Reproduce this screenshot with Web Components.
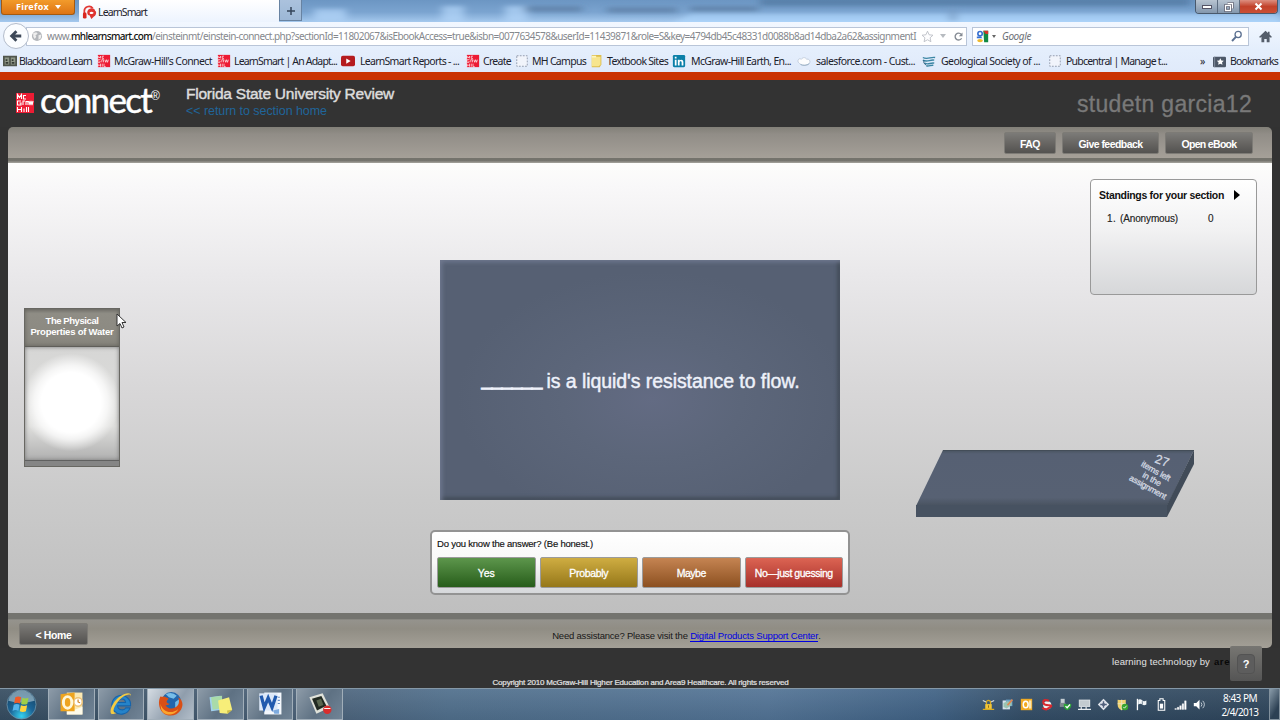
<!DOCTYPE html>
<html lang="en">
<head>
<meta charset="utf-8">
<title>LearnSmart</title>
<style>
body { margin: 0; width: 1280px; height: 720px; overflow: hidden; background: #323232; font-family: "Liberation Sans", sans-serif; }
</style>
</head>
<body>
<browser-chrome></browser-chrome>
<connect-header course="Florida State University Review" user="studetn garcia12"></connect-header>
<learn-frame>
  <tool-button slot="tools" w="52" t="20">FAQ</tool-button>
  <tool-button slot="tools" w="97" t="64">Give feedback</tool-button>
  <tool-button slot="tools" w="88" t="55">Open eBook</tool-button>
  <topic-card slot="left"></topic-card>
  <question-card slot="middle"></question-card>
  <answer-panel slot="middle"></answer-panel>
  <standings-box slot="right"></standings-box>
  <card-stack slot="right"></card-stack>
  <tool-button slot="home" w="69" t="36">&lt; Home</tool-button>
</learn-frame>
<page-credits></page-credits>
<task-bar></task-bar>

<script>
const icons = {
  globe: '<circle cx="8" cy="8" r="6.8" fill="#b4b7bb"/><path d="M3 4l4-1 2 2-3 2 1 2-2 3-2-3zM10 7l4-1-1 5-3 2z" fill="#eee"/>',
  learn: '<path d="M2.500 9V7a5 5 0 0 1 9-3.500" fill="none" stroke="#e23a35" stroke-width="1.800"/><rect x="1" y="8" width="3.800" height="6.500" rx="1.500" fill="#d9251f"/><path d="M6 6c1-3 7-4 8 0 2 1 1 5-1 6l-3 3-2-4c-2 0-3-3-2-5z" fill="#df3530"/><path d="M8 8.200q2-2 4.500 0-1 2-4 1z" fill="#fff"/>',
  bb: '<rect y="2" width="16" height="12" fill="#50564c"/><path d="M2 4h5v8H2zM9 4h5v8H9z" fill="#8f9787"/><path d="M3 6h2v2H3zM10 6h2v2h-2zM3 9h3v2H3zM10 9h3v2h-3z" fill="#363b35"/>',
  mh: '<rect x="1" y="1" width="14" height="14" fill="#ed1b34"/><path d="M1 5V2.500l1.500 2 1.500-2V5M8 2.500H6V5h2M1 6.500h3M1 6.500v3h2.500V8M5.500 9.500v-3h2v3M9 6.500l1 3 1-3 1 3 1-3M1 11v3.500M4 11v3.500M1 12.800h3M6 11v3.500M8 11v3.500h2" fill="none" stroke="#fff" stroke-opacity=".85" stroke-width=".9"/>',
  yt: '<rect y="2" width="16" height="12" rx="2" fill="#b51b1e"/><path d="M6 5l5 3-5 3z" fill="#fff"/>',
  blank: '<rect x="2" y="2" width="12" height="12" fill="#f1f4fb" stroke="#8993a6" stroke-dasharray="2 1.500"/>',
  folder: '<path d="M2 1h11v11l-2 3H2z" fill="#ddbd4d"/><path d="M2 3h10v9l-2 2H2z" fill="#f7e58e"/><path d="M2 2h5v2H2z" fill="#fff6bd"/>',
  li: '<rect x="1" y="1" width="14" height="14" rx="1.500" fill="#0b7fa8"/><path d="M3.200 6.500h2V13h-2zM3.200 3.200h2v2h-2zM6.700 6.500h2v1c1-1.700 4.300-1.500 4.300 1.500v4h-2V9.500c0-1.700-2.300-1.700-2.300 0V13h-2z" fill="#fff"/>',
  cloud: '<path d="M3 11c-4-3-1-7 2-5 2-3 5-2 6 0 4-1 5 4 2 6-3 2-7 1-10-1z" fill="#fcfdfe" stroke="#b4c2d2" stroke-width=".8"/><path d="M4 12c3 1.500 7 1 10-1" fill="none" stroke="#8fa9c0"/>',
  geo: '<path d="M1 4c5 3 9-1 14 0M1 7c5 3 8-1 13 0M3 10.500c4 2.500 7-1 11 0M5 13.500c3 1 5-1 8-.5" fill="none" stroke="#3b86a4" stroke-width="1.600"/><path d="M2 7q-1 4 3 6" fill="none" stroke="#2a5c7a"/>',
  marks: '<rect y="2" width="16" height="13" rx="1.500" fill="#4d5868"/><path d="M2 2v13" stroke="#8b96a6"/><path d="M9 4l1.300 2.700 3 .4-2.200 2 .6 3L9 10.700 6.300 12.100l.6-3-2.200-2 3-.4z" fill="#fff"/>',
  back: '<path d="M8.500 2.500L3 8l5.500 5.500M3.500 8H14" fill="none" stroke="#3d4858" stroke-width="3.200"/>',
  star: '<path d="M8 1.500l2 4.400 4.700.5-3.500 3.200 1 4.800L8 12l-4.200 2.400 1-4.800L1.300 6.400 6 5.900z" fill="#fdfdfe" stroke="#b5b9c0"/>',
  reload: '<path d="M12.500 10.500a5 5 0 1 1-.5-5.500" fill="none" stroke="#858b94" stroke-width="2"/><path d="M13.800 2v5.500H8.500z" fill="#858b94"/>',
  google: '<rect x="1" y="1" width="14" height="14" fill="#fff"/><path d="M9 1h6v14h-5z" fill="#128a45"/><path d="M9 1h6v4h-3z" fill="#d6332a"/><circle cx="5" cy="4.500" r="2.700" fill="none" stroke="#356fd0" stroke-width="2"/><path d="M1 8h5l2 2H1z" fill="#356fd0"/><ellipse cx="5" cy="13" rx="3.500" ry="2" fill="#f0ba2c"/>',
  find: '<circle cx="10" cy="5.500" r="3.800" fill="none" stroke="#5b7091" stroke-width="1.600"/><path d="M7.300 8.500L2.500 13.500" stroke="#5b7091" stroke-width="2.400"/>',
  house: '<path d="M8 1L0 8.500l1.500 1L3 8.300V15h3.500v-4h3v4H13V8.300l1.500 1.200 1.500-1-3-2.900V2h-2v1.800z" fill="#555e6b"/>',
  win: '<defs><radialGradient id="o" cx=".5" cy=".9" r=".9"><stop offset="0" stop-color="#35d1ef"/><stop offset=".45" stop-color="#1c6698"/><stop offset="1" stop-color="#16405f"/></radialGradient></defs><circle cx="8" cy="8" r="7.500" fill="url(#o)" stroke="#7296ac" stroke-width=".4"/><path d="M1.200 6A7 7 0 0 1 14.800 6Q8 8 1.200 6z" fill="#b9d0db" opacity=".6"/><path d="M4.800 4.300q1.500-.8 3 0L7.200 7.500q-1.400-.7-3 0z" fill="#f05b28"/><path d="M8.400 4.500q1.600.8 3.200 0L11 7.700q-1.600.7-3.200 0z" fill="#9fcf47"/><path d="M4 8.100q1.500-.7 3 0L6.400 11.300q-1.500-.8-3 0z" fill="#55b4ec"/><path d="M7.700 8.400q1.600.7 3.200 0l-.6 3.100q-1.600.8-3.200 0z" fill="#ffd33d"/>',
  outlook: '<rect x="5" y="1" width="10" height="14" fill="#fce9b2"/><path d="M5 10l5 2 5-2v5H5z" fill="#fffbea"/><path d="M1 2l9-1v12L1 13z" fill="#eea41f"/><ellipse cx="5.500" cy="7.300" rx="2.700" ry="3.700" fill="none" stroke="#fff6d6" stroke-width="1.900"/><circle cx="12.200" cy="7" r="2.700" fill="#fff" stroke="#eec275"/><path d="M12.200 5.500V7l1.300.6" fill="none" stroke="#cc7b12" stroke-width=".7"/>',
  ie: '<path d="M13.800 9.500H5.500c.4 3.300 4.500 3 5.200 1.300H13.500A6 6 0 1 1 13.800 9.500zM5.600 7.400h5c-.3-3-4.500-3-5 0z" fill="#2583c9" stroke="#1464ac" stroke-width=".7"/><path d="M14 3.500C14.800-.8 6 2 2.500 8.500.5 12-.2 16.500 4.700 14 1.500 14 3 10 6 6.500S14 .800 14 3.500z" fill="#f3cb42"/>',
  firefox: '<circle cx="8.500" cy="7" r="6.300" fill="#2366ad"/><path d="M5 2q4-2 7 1l-2 2-3-1zM11 7l3-2v4l-3 2z" fill="#77bde8"/><path d="M1.500 3.500Q2.500 4 4 3.500 5.500 4 6.800 4.800L5.500 6.500c0 1 .8 1.500 2 1.700-.8 1-2 1-2.700 1 2 2.800 6 2.500 8-.2.800-1.300.8-3.200.2-5C16 6 16.300 9 14.700 12c-3 5-10.500 5-13 0C.200 9 .400 6 1.500 3.500z" fill="#d94f16"/><path d="M1.500 8c1 5 7 7.500 11.500 3.500-2 4.500-9.500 5-11 0z" fill="#fba52d"/>',
  notes: '<path d="M1 4l7-1 1 9-7 1z" fill="#a1d1ee"/><path d="M2 4l7-1v8l-6 1z" fill="#a9dba9"/><path d="M6.500 6l7-2 2 8-3 2.500-5-.5z" fill="#f7ee79"/><path d="M15.500 12l-3 2.500-.3-2z" fill="#cdbd48"/>',
  word: '<rect x="4" y="1" width="11" height="14" fill="#f4f8fd"/><path d="M12.500 4H14M12.500 6H14M12.500 8H14" stroke="#6b91c5" stroke-width=".7"/><path d="M.8 1.500H12.500V12.500H.8z" fill="#dce8f8"/><path d="M2 3l2 7.500 2.500-6 2.500 6L11.500 3" fill="none" stroke="#215aae" stroke-width="2.100"/><path d="M9.500 12.500l4-1v3h-3z" fill="#7eabdf"/>',
  cam: '<path d="M1.500 4l8.500-2.500 4.500 9-8.500 4z" fill="#e0e2da"/><path d="M3.200 5l6-1.800 3.200 6.300-6 3z" fill="#222a22"/><path d="M6 6l3-1 1.500 4-3 1z" fill="#59664f"/><circle cx="13" cy="12" r="2.700" fill="#d82d2d"/><path d="M11 11.200h4" stroke="#fff" stroke-width=".6"/>',
  lock: '<path d="M1 3l4 2M15 3l-4 2" stroke="#ddd" stroke-width="1.300"/><path d="M5.500 8V5.500a2.500 2.500 0 0 1 5 0V8" fill="none" stroke="#d9ac21" stroke-width="1.500"/><rect x="4" y="7.500" width="8" height="6" fill="#f4c636"/><path d="M1 14h14" stroke="#d9ac21" stroke-width="1.500"/><path d="M8 9v3" stroke="#765b10"/>',
  pc: '<path d="M2 3h9v11H2z" fill="#d5e3ed"/><path d="M6 2h8v8H6z" fill="#6ba4c8"/><path d="M3 6l5-2 5 1v4l-6 4-4-2z" fill="#9ac4b2"/><path d="M8 9l6-7" stroke="#e28650" stroke-width="2"/>',
  outl: '<rect x="1" y="1" width="14" height="14" fill="#f1aa22"/><path d="M11 3h3v10h-3z" fill="#fbe7b1"/><ellipse cx="7" cy="8" rx="3" ry="4" fill="none" stroke="#fff" stroke-width="1.800"/>',
  s: '<circle cx="9" cy="9" r="5" fill="#eee"/><path d="M11 3.500Q4 1 4 5t7 4-3 5q-3 0-5-2" fill="none" stroke="#d8272d" stroke-width="2.600"/>',
  usb: '<path d="M2 1h5v7H2z" fill="#c4ccd2"/><path d="M1 6h7v5H1z" fill="#7d8790"/><path d="M6 7l5 1 4-1q1 6-5 8-5-2-4-8z" fill="#2ba336"/><path d="M8 10l2 2 3.500-4" fill="none" stroke="#fff" stroke-width="1.500"/>',
  net: '<rect x="1" y="2" width="14" height="9" fill="#dce2e5"/><path d="M2 3h12v7H2z" fill="#c3cbd0"/><path d="M0 14h16M4 11v3M10 11v3" stroke="#e8ecef" stroke-width="1.500"/>',
  gem: '<path d="M8 1l7 7-7 7-7-7z" fill="#e0e4ec"/><path d="M8 4v8M4 8h8" stroke="#52617d" stroke-width="1.700"/><circle cx="8" cy="8" r="2" fill="#52617d"/>',
  shield: '<path d="M2 2q5 1 10 0v6q-1 5-5 7-5-2-5-7z" fill="#f2d371"/><path d="M7 2v13M2 7h10" stroke="#e7e5cd"/><circle cx="11" cy="11" r="4" fill="#37a32f"/><path d="M9 11l1.500 1.500L13 9.500" fill="none" stroke="#fff"/>',
  flag: '<path d="M3 1v14" stroke="#fff" stroke-width="1.600"/><path d="M4 2q3-1 5 1t5 0v5q-3 2-5 0T4 8z" fill="#f2f5f7"/><path d="M9 4v4" stroke="#52677c"/>',
  bat: '<path d="M6 1h4v2h2v12H4V3h2z" fill="none" stroke="#fff" stroke-width="1.300"/><path d="M6 7h4v6H6z" fill="#fff"/>',
  bars: '<path d="M1 13h2v1H1zM4 11.500h2V14H4zM7 9.500h2V14H7zM10 7h2v7h-2zM13 3.500h2V14h-2z" fill="#fff" stroke="#fff" stroke-width=".4"/>',
  vol: '<path d="M1 6h3l4-4v12l-4-4H1z" fill="#fff"/><path d="M10 5.500q2 2.500 0 5M12 3.500q4 4.500 0 9" fill="none" stroke="#dde5ec"/>'
};

// attaches an open root and fills it
function root(el, html) {
  el.attachShadow({ mode: 'open' }).innerHTML = html;
}

class UiIcon extends HTMLElement {
  constructor() {
    super();
    const s = this.getAttribute('s') || 14;
    root(this, `<style>:host{display:block;flex:none;width:${s}px;height:${s}px} svg{display:block}</style>
      <svg width="${s}" height="${s}" viewBox="0 0 16 16">${icons[this.getAttribute('n')]}</svg>`);
  }
}
customElements.define('ui-icon', UiIcon);

// one line of text, tracked so that it fills the width in w
class FitText extends HTMLElement {
  constructor() {
    super();
    root(this, `<style>:host{display:inline-block;flex:none;white-space:pre} span{display:inline-block}</style><span><slot></slot></span>`);
  }
  connectedCallback() {
    const span = this.shadowRoot.querySelector('span');
    const want = +this.getAttribute('w');
    const n = this.textContent.length;
    const got = span.getBoundingClientRect().width;
    span.style.letterSpacing = ((want - got) / n) + 'px';
    this.style.width = want + 'px';
  }
}

class BookmarkItem extends HTMLElement {
  constructor() {
    super();
    const a = this.getAttribute.bind(this);
    root(this, `<style>
      :host{display:flex;flex:none;align-items:center;width:${a('w')}px;height:22px}
      ui-icon{margin-right:${a('gap') || 3}px}
      </style><ui-icon n="${a('icon')}"></ui-icon><fit-text w="${a('t')}">${a('label')}</fit-text>`);
  }
}
customElements.define('bookmark-item', BookmarkItem);

class BrowserChrome extends HTMLElement {
  constructor() {
    super();
    const marks = [
      ['bb', 94, 2, 73, 'Blackboard Learn'], ['mh', 120, 3, 98, "McGraw-Hill's Connect"],
      ['mh', 124, 3, 103, 'LearnSmart | An Adapt...'], ['yt', 125, 5, 99, 'LearnSmart Reports - ...'],
      ['mh', 49, 3, 28, 'Create'], ['blank', 75, 3, 54, 'MH Campus'], ['folder', 82, 3, 61, 'Textbook Sites'],
      ['li', 125, 5, 100, 'McGraw-Hill Earth, En...'], ['cloud', 125, 5, 99, 'salesforce.com - Cust...'],
      ['geo', 126, 5, 99, 'Geological Society of ...'], ['blank', 152, 4, 101, 'Pubcentral | Manage t...']
    ];
    root(this, `<style>
      :host{display:block;height:80px;font:10.500px "Noto Sans",sans-serif;color:#1c222c}
      .top{height:22px;display:flex;position:relative;background:linear-gradient(#6c96c3,#7ba4d0 55%,#a5c9ee)}
      .aero{position:absolute;left:0;top:0}
      .fx{position:relative;width:74px;height:15px;margin:0 4px 0 1px;box-sizing:border-box;border:1px solid #a35a11;border-top:0;border-radius:0 0 3px 3px;background:linear-gradient(#f29b2b,#dd7414);color:#fff;font:bold 9px/13px "Noto Sans",sans-serif;display:flex;padding-left:14px;gap:6px}
      .fx i{border:3px solid transparent;border-top:4px solid #fff;border-bottom:0;height:0;margin-top:5px}
      .tab{position:relative;width:200px;height:22px;background:linear-gradient(#fff,#edf4fe);display:flex;align-items:center;gap:1px;box-sizing:border-box;padding:2px 0 0 3px}
      .plus{position:relative;width:23px;height:21px;background:linear-gradient(#abc2dd,#9cb7d6);border:1px solid #6883a2;border-width:0 1px 1px;box-sizing:border-box;display:grid;place-items:center;padding-top:2px}
      .wins{position:relative;margin-left:auto;margin-right:2px;display:flex;height:14px;border:1px solid #49596c;border-top:0;border-radius:0 0 4px 4px;overflow:hidden;box-sizing:border-box}
      .wins div{width:21px;background:linear-gradient(#b8c4d1,#8397ad);border-right:1px solid #5d6d80;display:grid;place-items:center}
      .wins div:last-child{width:37px;background:linear-gradient(#dd8f80,#c2422b 50%,#cb4f35);border:0}
      .nav{height:28px;background:linear-gradient(#f2f7ff,#e4eefc);display:flex;align-items:center;position:relative;box-sizing:border-box}
      .back{width:24px;height:24px;border:1px solid #b3bccb;border-radius:50%;background:#fbfdff;display:grid;place-items:center;margin-left:3px;position:relative;z-index:1}
      .field{height:19px;border:1px solid #b9c5d8;background:#fff;display:flex;align-items:center;box-sizing:border-box}
      .url{width:941px;margin-left:-3px;padding-left:7px;font-size:10px;color:#85888d}
      .url b{font-weight:500;color:#111}
      .search{width:277px;margin-left:5px;padding:0 3px;color:#6d7178;font-style:italic;font-size:10px}
      .search ui-icon:last-child{margin-left:auto;margin-right:2px}
      .dd{border:3px solid transparent;border-top:4px solid #b7bbc0;border-bottom:0;flex:none}
      .marks{height:22px;display:flex;align-items:center;background:linear-gradient(#e4eefc,#e0eafa);padding-left:3px}
      .red{height:8px;background:#ca3303}
      </style>
      <div class="top">
        <svg class="aero" width="1280" height="22"><defs><filter id="b"><feGaussianBlur stdDeviation="4 2"/></filter><linearGradient id="g" x2="0" y2="1"><stop offset="0" stop-color="#9cc5ee"/><stop offset="1" stop-color="#b4dafe"/></linearGradient></defs>
          <g filter="url(#b)"><path d="M690 14h590v12H670z" fill="url(#g)"/><path d="M314 9h32v12h-32zM442 6h22v16h-22zM505 6h22v16h-22z" fill="#b4d6fa" opacity=".7"/>
          <path d="M524 9h58M607 10h70M690 9h68" stroke="#4f6f93" stroke-width="5" opacity=".6"/><path d="M760 2h430" stroke="#45688f" stroke-width="8" opacity=".5"/><path d="M949 9h8v12h-8z" fill="#7599c2" opacity=".7"/></g></svg>
        <div class="fx"><fit-text w="33">Firefox</fit-text><i></i></div>
        <div class="tab"><ui-icon n="learn" s="15"></ui-icon><fit-text w="49">LearnSmart</fit-text></div>
        <div class="plus"><svg width="10" height="10"><path d="M5 1v8M1 5h8" stroke="#35445a" stroke-width="1.500"/></svg></div>
        <div class="wins"><div><svg width="10" height="6"><rect x=".5" y="1.500" width="9" height="3" fill="#fff" stroke="#556"/></svg></div><div><svg width="10" height="10"><path d="M3.500 1.500h5v5M1.500 3.500h5v5h-5z" fill="none" stroke="#445" stroke-width="2.400"/><path d="M3.500 1.500h5v5M1.500 3.500h5v5h-5z" fill="none" stroke="#fff" stroke-width="1.300"/></svg></div><div><svg width="9" height="9"><path d="M1.500 1.500l6 6M7.500 1.500l-6 6" stroke="#fff" stroke-width="2"/></svg></div></div>
      </div>
      <div class="nav">
        <div class="back"><ui-icon n="back"></ui-icon></div>
        <div class="field url"><ui-icon n="globe" s="12" style="margin-left:-3px;margin-right:4px"></ui-icon><fit-text w="24">www.</fit-text><b><fit-text w="81">mhlearnsmart.com</fit-text></b><fit-text w="764">/einsteinmt/einstein-connect.php?sectionId=11802067&amp;isEbookAccess=true&amp;isbn=0077634578&amp;userId=11439871&amp;role=S&amp;key=4794db45c48331d0088b8ad14dba2a62&amp;assignmentI</fit-text>
          <ui-icon n="star" s="13" style="margin-left:5px"></ui-icon><span class="dd" style="margin:0 7px 0 6px"></span><ui-icon n="reload" s="11"></ui-icon></div>
        <div class="field search"><ui-icon n="google" s="13"></ui-icon><span class="dd" style="margin:0 6px 0 3px;border-width:3px 2.500px 0;border-top-color:#666"></span><fit-text w="29">Google</fit-text><ui-icon n="find" s="13"></ui-icon></div>
        <ui-icon n="house" s="13" style="margin-left:10px"></ui-icon>
      </div>
      <div class="marks">
        ${marks.map(m => `<bookmark-item icon="${m[0]}" w="${m[1]}" gap="${m[2]}" t="${m[3]}" label="${m[4]}"></bookmark-item>`).join('')}
        <fit-text w="13">»</fit-text><ui-icon n="marks" s="13" style="margin-right:4px"></ui-icon><fit-text w="48">Bookmarks</fit-text>
      </div>
      <div class="red"></div>`);
  }
}
customElements.define('browser-chrome', BrowserChrome);

class ConnectHeader extends HTMLElement {
  constructor() {
    super();
    root(this, `<style>
      :host{display:flex;height:47px;background:#333;color:#dcdcdc;box-sizing:border-box;padding-left:16px}
      svg{margin-top:13px;flex:none}
      .name{margin:-3px 0 0 6px;font:400 35px/45px Lato,sans-serif;color:#fff;width:112px;-webkit-text-stroke:.5px #fff}
      sup{font:12px/12px "Liberation Sans",sans-serif;color:#fff;margin:10px 0 0 -1px;width:12px}
      .course{margin-left:23px;padding-top:5px;font-size:15.500px;line-height:18px;-webkit-text-stroke:.45px #dcdcdc}
      .back{display:block;font-size:12.500px;color:#20659a;line-height:17px;-webkit-text-stroke:0}
      .user{margin:10px 28px 0 auto;font-size:23px;line-height:28px;color:#797979;-webkit-text-stroke:.3px #797979}
      </style>
      <svg width="18" height="20" viewBox="0 0 18 20"><rect width="18" height="20" fill="#ee1c34"/><path d="M1.500 6V1.500l2 3 2-3V6M10 2.500H7.500V6H10M5 8H1.500v4H5v-2H3.500M7 12V8h2M10 12V8.500h2V12M13 8l1 4 1-4 1 4 1-4M1.500 14v5M5.500 14v5M1.500 16.500h4M8 15.500V19M10.500 14v5M12.500 14v5" fill="none" stroke="#fff" stroke-width="1.100"/></svg>
      <div class="name"><fit-text w="111">connect</fit-text></div><sup>®</sup>
      <div class="course"><fit-text w="208">${this.getAttribute('course')}</fit-text><span class="back"><fit-text w="141">&lt;&lt; return to section home</fit-text></span></div>
      <div class="user"><fit-text w="175">${this.getAttribute('user')}</fit-text></div>`);
  }
}
customElements.define('connect-header', ConnectHeader);

class LearnFrame extends HTMLElement {
  constructor() {
    super();
    root(this, `<style>
      :host{display:block;width:1264px;height:521px;margin:0 auto;border-radius:5px;overflow:hidden}
      .bar{height:36px;box-sizing:border-box;background:linear-gradient(#828078,#918d87 20%,#a5a098 86%,#74736c 87%,#74736c 93%,#a7a59e);display:flex;justify-content:flex-end;gap:6px;padding:5px 19px 0}
      .stage{height:450px;background:linear-gradient(#fdfdfb,#f9f8f9 5%,#e9e8ea 25%,#d8d7d8 50%,#cacaca 75%,#bfbfbf);display:grid;grid-template-columns:422px 420px 422px}
      .col{display:flex;flex-direction:column}
      .foot{height:35px;box-sizing:border-box;background:linear-gradient(#74746f 0,#74746f 16%,#95938d 20%,#908d84 45%,#a4a097);display:grid;grid-template-columns:422px 420px 422px;align-items:start;padding-top:10px;font-size:9.500px;color:#181818}
      .foot slot{display:block;padding-left:11px}
      .help{display:flex;justify-content:center;padding:6px 0 0 93px;line-height:13px}
      a{color:#0000e0;text-decoration:none}
      a fit-text{border-bottom:1px solid #0000e0;line-height:11px;margin-top:1px}
      </style>
      <div class="bar"><slot name="tools"></slot></div>
      <div class="stage"><div class="col"><slot name="left"></slot></div><div class="col"><slot name="middle"></slot></div><div class="col"><slot name="right"></slot></div></div>
      <div class="foot"><slot name="home"></slot><div class="help"><fit-text w="138">Need assistance? Please visit the </fit-text><a href="#"><fit-text w="128">Digital Products Support Center</fit-text></a>.</div></div>`);
  }
}
customElements.define('learn-frame', LearnFrame);

class ToolButton extends HTMLElement {
  constructor() {
    super();
    root(this, `<style>
      :host{display:flex;flex:none;justify-content:center;width:${this.getAttribute('w')}px;height:22px;box-sizing:border-box;border:1px solid #7d7b76;border-radius:2px;background:linear-gradient(#7c7b78,#666461 55%,#535250);color:#fff;font:bold 10.500px/22px "Liberation Sans",sans-serif}
      </style><fit-text w="${this.getAttribute('t')}">${this.innerHTML}</fit-text>`);
  }
}
customElements.define('tool-button', ToolButton);

class TopicCard extends HTMLElement {
  constructor() {
    super();
    root(this, `<style>
      :host{display:flex;flex-direction:column;width:96px;height:159px;margin:145px 0 0 16px;box-sizing:border-box;border:1px solid #686762;position:relative}
      .head{height:38px;box-sizing:border-box;padding-top:6px;text-align:center;background:linear-gradient(#7a7872,#8f8d85 12%,#8b8981 75%,#85837b);box-shadow:inset 0 0 4px #63625c;border-bottom:1px solid #5f5e59;color:#fff;font:bold 9.500px/11px "Liberation Sans",sans-serif}
      .body{flex:1;background:radial-gradient(circle at 49% 49%,#fff 30px,rgba(255,255,255,.75) 37px,rgba(255,255,255,0) 49px),linear-gradient(#d6d6d5,#dededc 70%,#b0b0b0);box-shadow:inset 0 0 4px #777}
      .edge{height:6px;box-sizing:border-box;border-top:1px solid #606060;background:#858585}
      svg{position:absolute;left:91px;top:4px}
      </style>
      <div class="head"><fit-text w="53">The Physical</fit-text><br><fit-text w="83">Properties of Water</fit-text></div>
      <div class="body"></div><div class="edge"></div>
      <svg width="11" height="17"><path d="M1 1v12l3-2.500 2 4.500 2-1-2-4.500h4z" fill="#fff" stroke="#333"/></svg>`);
  }
}
customElements.define('topic-card', TopicCard);

class QuestionCard extends HTMLElement {
  constructor() {
    super();
    root(this, `<style>
      :host{display:grid;place-items:center;width:400px;height:240px;box-sizing:border-box;margin:97px 10px 0;padding-top:2px;background:radial-gradient(ellipse at 53% 58%,#636b83,#5c667a 30%,#566073 65%);box-shadow:inset 2px 2px 4px #717a91,inset -2px -2px 4px #3b444e;color:#eef1fa;font-size:19.500px;-webkit-text-stroke:.45px #eef1fa}
      div{display:flex;align-items:center;gap:5px;padding-left:1px}
      .gap{margin-top:-6px;-webkit-text-stroke-width:.8px}
      </style><div><fit-text class="gap" w="60">______</fit-text><fit-text w="253">is a liquid's resistance to flow.</fit-text></div>`);
  }
}
customElements.define('question-card', QuestionCard);

class AnswerPanel extends HTMLElement {
  constructor() {
    super();
    const answers = [['Yes', '#5d964c', '#275d1a', 17], ['Probably', '#cfad42', '#957719', 39], ['Maybe', '#c58452', '#8c5020', 29], ['No—just guessing', '#dc6453', '#a7302a', 78]];
    root(this, `<style>
      :host{display:block;height:65px;margin-top:30px;box-sizing:border-box;border:2px solid #939393;border-radius:5px;background:linear-gradient(#fff,#f8f8f8 50%,#d5d7da);padding:6px 5px 0;font-size:9.500px;line-height:12px;color:#111;-webkit-text-stroke:.15px}
      .row{display:flex;gap:4px;margin-top:7px}
      .row div{width:98.600px;height:31px;box-sizing:border-box;border:1.500px solid #9b9b9b;border-radius:2px;display:flex;justify-content:center;color:#fff;font-size:10.500px;line-height:30px;-webkit-text-stroke:.3px #fff}
      </style><fit-text w="156">Do you know the answer? (Be honest.)</fit-text>
      <div class="row">${answers.map(a => `<div style="background:linear-gradient(${a[1]},${a[2]})"><fit-text w="${a[3]}">${a[0]}</fit-text></div>`).join('')}</div>`);
  }
}
customElements.define('answer-panel', AnswerPanel);

class StandingsBox extends HTMLElement {
  constructor() {
    super();
    root(this, `<style>
      :host{display:block;width:167px;height:116px;margin:16px 0 0 240px;box-sizing:border-box;border:1.500px solid #999;border-radius:4px;background:linear-gradient(#fff,#f1f1f2 45%,#d6d7d9);padding:8px 0 0 8px;font-size:10px;line-height:14px;color:#222}
      .title{display:flex;align-items:center;gap:10px;font-weight:bold;color:#111;font-size:10.500px}
      i{border:5px solid transparent;border-left:6px solid #000;border-right:0}
      .row{display:grid;grid-template-columns:13px 88px auto;padding:10px 0 0 8px;-webkit-text-stroke:.15px}
      </style><div class="title"><fit-text w="125">Standings for your section</fit-text><i></i></div>
      <div class="row"><fit-text w="9">1.</fit-text><fit-text w="58">(Anonymous)</fit-text><fit-text w="6">0</fit-text></div>`);
  }
}
customElements.define('standings-box', StandingsBox);

class CardStack extends HTMLElement {
  constructor() {
    super();
    root(this, `<style>:host{display:block;margin:154px 0 0 65px} svg{display:block} text{font-family:"Liberation Sans",sans-serif;fill:#d3d9e2;stroke:#d3d9e2;stroke-width:.3px;text-anchor:middle;font-size:8.500px}</style>
      <svg width="280" height="70"><defs><linearGradient id="t" x2="0" y2="1"><stop offset="0" stop-color="#48535f"/><stop offset=".07" stop-color="#566073"/><stop offset=".85" stop-color="#576173"/><stop offset="1" stop-color="#48525f"/></linearGradient></defs>
      <path d="M28 1h251l-27 56H1z" fill="url(#t)"/>
      <path d="M1 56h251v12H1z" fill="#475261"/>
      <path d="M279 1v14l-27 53V56z" fill="#414b58"/>
      <path d="M28 1.500h251" stroke="#434d58"/>
      <g transform="translate(247 12) rotate(20)"><text y="4" textLength="14" style="font-size:12.500px">27</text></g>
      <g transform="translate(241 22) rotate(29)"><text y="3" textLength="32">items left</text></g>
      <g transform="translate(237 30) rotate(29)"><text y="3" textLength="20">in the</text></g>
      <g transform="translate(233 38) rotate(29)"><text y="3" textLength="41">assignment</text></g></svg>`);
  }
}
customElements.define('card-stack', CardStack);

class PageCredits extends HTMLElement {
  constructor() {
    super();
    root(this, `<style>
      :host{display:block;height:40px;background:#333;position:relative;color:#e4e4e4;font-size:9.500px}
      .by{display:flex;justify-content:flex-end;gap:4px;padding:7px 50px 0 0;line-height:14px}
      .by b{color:#080808}
      .copy{text-align:center;font-size:8px;line-height:12px;padding:8px 0 0 1px;-webkit-text-stroke:.2px}
      .help{position:absolute;left:1230px;top:-2px;width:32px;height:35px;border-radius:2px;background:linear-gradient(#777672,#555);display:grid;place-items:center}
      .help b{width:16px;height:18px;border-radius:4px;background:#5d5d5d;border:1px solid #535353;text-align:center;font-size:11px;line-height:19px;color:#fff}
      </style><div class="by"><fit-text w="98">learning technology by</fit-text><b><fit-text w="16">are</fit-text></b></div>
      <div class="copy"><fit-text w="296">Copyright 2010 McGraw-Hill Higher Education and Area9 Healthcare. All rights reserved</fit-text></div>
      <div class="help"><b>?</b></div>`);
  }
}
customElements.define('page-credits', PageCredits);

class TaskBar extends HTMLElement {
  constructor() {
    super();
    const apps = ['outlook', 'ie', 'firefox', 'notes', 'word', 'cam'];
    const tray = ['lock', 'pc', 'outl', 's', 'usb', 'net', 'gem', 'shield', 'flag', 'bat', 'bars', 'vol'];
    root(this, `<style>
      :host{display:flex;height:32px;box-sizing:border-box;border-top:1px solid #8598a7;background:linear-gradient(rgba(255,255,255,.08),rgba(0,0,0,.06)),linear-gradient(90deg,#354c60,#4b6178 24%,#4f6e8b 35%,#517294 60%,#3f6184 73%,#334d66 80%,#2e455b)}
      .start{width:44px;padding-left:6px;box-sizing:border-box;margin-right:4px}
      .apps{display:flex;gap:3px}
      .apps div{width:46.700px;height:31px;box-sizing:border-box;border:1px solid #a1aeb9;border-top:0;background:linear-gradient(125deg,#8d9ba8,#5e7183 55%,#718496);display:grid;place-items:center;padding-bottom:2px}
      .apps .on{background:linear-gradient(125deg,#d5dce3,#8f9dac 60%,#b3bec9)}
      .tray{display:flex;align-items:center;gap:6.200px;margin-left:auto;margin-right:11px}
      .clock{width:46px;color:#fff;text-align:center;font:10px/13.500px "Noto Sans",sans-serif;padding-top:3px;white-space:nowrap}
      .peek{width:11px;margin-left:6px;border:1px solid #82919d;border-top:0;background:linear-gradient(120deg,#899ba9,#2c4053 70%);box-sizing:border-box}
      </style>
      <div class="start"><ui-icon n="win" s="31"></ui-icon></div>
      <div class="apps">${apps.map(a => `<div class="${a == 'firefox' ? 'on' : ''}"><ui-icon n="${a}" s="25"></ui-icon></div>`).join('')}</div>
      <div class="tray">${tray.map(a => `<ui-icon n="${a}" s="13"></ui-icon>`).join('')}</div>
      <div class="clock"><fit-text w="34">8:43 PM</fit-text><br><fit-text w="37">2/4/2013</fit-text></div>
      <div class="peek"></div>`);
  }
}
customElements.define('task-bar', TaskBar);

// last, so the surrounding layout is there to measure
customElements.define('fit-text', FitText);
</script>
</body>
</html>
